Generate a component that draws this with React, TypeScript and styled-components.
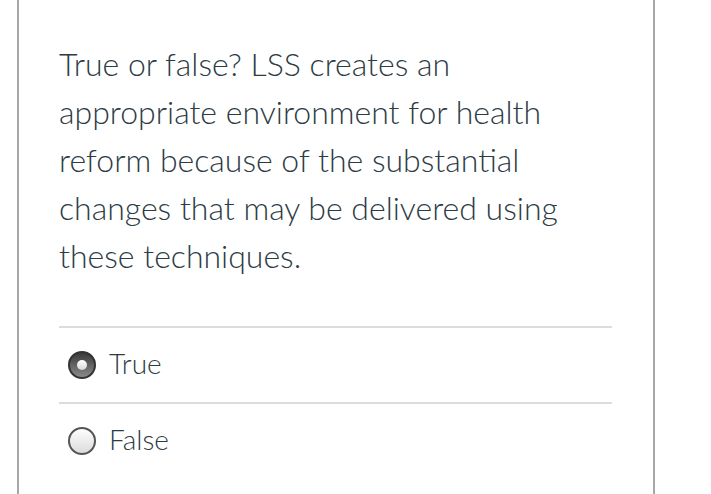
import React from "react";
import styled, { createGlobalStyle } from "styled-components";

const Global = createGlobalStyle`
  html, body { margin: 0; padding: 0; background: #fff; }
  body { font-family: Lato, "Open Sans", sans-serif; }
`;

const Page = styled.div`
  height: 494px;
  overflow: hidden;
  padding-left: 17px;
`;

const Card = styled.div`
  width: 553px;
  min-height: 520px;
  border-left: 2px solid #a7a7a7;
  border-right: 2px solid #a7a7a7;
  padding: 40px 41px 0 40px;
  box-sizing: content-box;
`;

const Question = styled.div`
  font-size: 32px;
  font-weight: 300;
  line-height: 48px;
  color: #2d3b45;
  margin: 0;
`;

const Answers = styled.div`
  margin-top: 46px;
  display: flex;
  flex-direction: column;
`;

const Answer = styled.label`
  display: flex;
  align-items: center;
  gap: 13px;
  height: 74px;
  border-top: 2px solid #dcdcdc;
  padding-left: 9px;
  font-size: 28px;
  font-weight: 300;
  color: #2d3b45;
`;

const AnswerText = styled.span`
  margin-bottom: 5px;
`;

const Radio = styled.span<{ $checked: boolean }>`
  width: 28px;
  height: 28px;
  border-radius: 50%;
  box-sizing: border-box;
  display: flex;
  align-items: center;
  justify-content: center;
  border: 2px solid ${(p) => (p.$checked ? "#333" : "#555")};
  background: ${(p) =>
    p.$checked
      ? "linear-gradient(#3a3a3a, #8a8a8a)"
      : "linear-gradient(#fdfdfd, #dcdcdc)"};
  &::after {
    content: "";
    display: ${(p) => (p.$checked ? "block" : "none")};
    width: 10px;
    height: 10px;
    border-radius: 50%;
    background: linear-gradient(#ffffff, #d8d8d8);
  }
`;

export default function App() {
  return (
    <>
      <Global />
      <Page>
        <Card>
          <Question>
            True or false? LSS creates an appropriate environment for health
            reform because of the substantial changes that may be delivered
            using these techniques.
          </Question>
          <Answers>
            <Answer>
              <Radio $checked={true} />
              <AnswerText>True</AnswerText>
            </Answer>
            <Answer>
              <Radio $checked={false} />
              <AnswerText>False</AnswerText>
            </Answer>
          </Answers>
        </Card>
      </Page>
    </>
  );
}
